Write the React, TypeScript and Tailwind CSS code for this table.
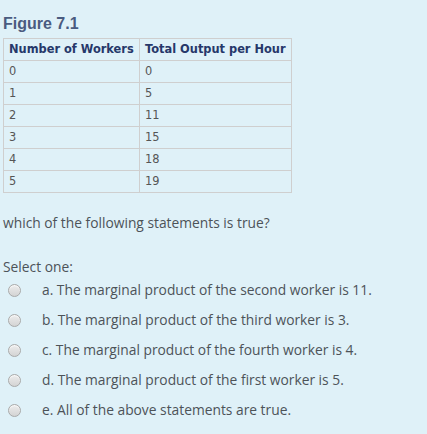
import React from "react";

const rows: [string, string][] = [
  ["0", "0"],
  ["1", "5"],
  ["2", "11"],
  ["3", "15"],
  ["4", "18"],
  ["5", "19"],
];

const options = [
  "a. The marginal product of the second worker is 11.",
  "b. The marginal product of the third worker is 3.",
  "c. The marginal product of the fourth worker is 4.",
  "d. The marginal product of the first worker is 5.",
  "e. All of the above statements are true.",
];

function Radio() {
  return (
    <span className="block w-[13px] h-[13px] rounded-full border border-[#a9a9a9] bg-gradient-to-b from-[#ececec] to-[#d4d4d4] shadow-[inset_0_1px_1px_rgba(255,255,255,0.8)]" />
  );
}

export default function App() {
  return (
    <div className="w-[427px] h-[434px] bg-[#dff1f8] pl-[3px] pt-[14px] overflow-hidden">
      <div className="font-['Liberation_Sans',Arial,sans-serif] font-bold text-[16px] leading-[20px] text-[#4a5b80]">
        Figure 7.1
      </div>
      <table className="mt-[4px] border-collapse font-['DejaVu_Sans',Verdana,sans-serif] text-[11.4px]">
        <thead>
          <tr>
            <th className="h-[22px] border border-[#cfcfcf] px-[5px] text-left font-bold text-[#26386a] w-[136px]">
              Number of Workers
            </th>
            <th className="h-[22px] border border-[#cfcfcf] px-[5px] text-left font-bold text-[#26386a] w-[152px]">
              Total Output per Hour
            </th>
          </tr>
        </thead>
        <tbody>
          {rows.map(([a, b]) => (
            <tr key={a}>
              <td className="h-[22px] border border-[#cfcfcf] px-[5px] text-[#555]">{a}</td>
              <td className="h-[22px] border border-[#cfcfcf] px-[5px] text-[#555]">{b}</td>
            </tr>
          ))}
        </tbody>
      </table>
      <div className="font-['Open_Sans',sans-serif] text-[13.8px] text-[#4d5358]">
        <p className="mt-[20px] leading-[20px]">which of the following statements is true?</p>
        <p className="mt-[26px] leading-[16px]">Select one:</p>
        <div className="flex flex-col">
          {options.map((o) => (
            <div key={o} className="flex items-center h-[30px]">
              <span className="w-[39px] pl-[5px] flex items-center">
                <Radio />
              </span>
              <span className="leading-[20px]">{o}</span>
            </div>
          ))}
        </div>
      </div>
    </div>
  );
}
